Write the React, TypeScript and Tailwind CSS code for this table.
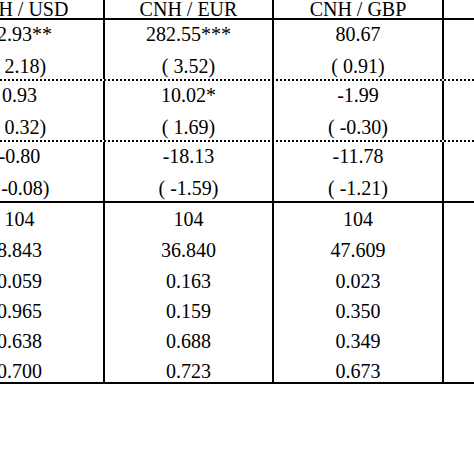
const header = ["CNH / USD", "CNH / EUR", "CNH / GBP", ""];

type Line = { cells: string[]; cls: string };

// blocks of rows, each block closed by a rule; cls = row height + line height
const blocks: { rows: Line[]; rule: "dotted" | "solid" }[] = [
  {
    rows: [
      { cells: ["62.93**", "282.55***", "80.67", ""], cls: "h-[29px] leading-[28px]" },
      { cells: ["( 2.18)", "( 3.52)", "( 0.91)", ""], cls: "h-[30px] leading-[34px]" },
    ],
    rule: "dotted",
  },
  {
    rows: [
      { cells: ["0.93", "10.02*", "-1.99", ""], cls: "h-[29px] leading-[28px]" },
      { cells: ["( 0.32)", "( 1.69)", "( -0.30)", ""], cls: "h-[30px] leading-[34px]" },
    ],
    rule: "dotted",
  },
  {
    rows: [
      { cells: ["-0.80", "-18.13", "-11.78", ""], cls: "h-[29px] leading-[28px]" },
      { cells: ["( -0.08)", "( -1.59)", "( -1.21)", ""], cls: "h-[30px] leading-[35px]" },
    ],
    rule: "solid",
  },
  {
    rows: [
      { cells: ["104", "104", "104", ""], cls: "h-[31px] leading-[33px]" },
      { cells: ["8.843", "36.840", "47.609", ""], cls: "h-[30px] leading-[33px]" },
      { cells: ["0.059", "0.163", "0.023", ""], cls: "h-[30px] leading-[34px]" },
      { cells: ["0.965", "0.159", "0.350", ""], cls: "h-[30px] leading-[34px]" },
      { cells: ["0.638", "0.688", "0.349", ""], cls: "h-[30px] leading-[34px]" },
      { cells: ["0.700", "0.723", "0.673", ""], cls: "h-[28px] leading-[34px]" },
    ],
    rule: "solid",
  },
];

function Row({ cells, cls }: Line) {
  return (
    <div className="grid grid-cols-[169px_169px_170px_170px]">
      {cells.map((c, i) => (
        <div
          key={i}
          className={`${cls} whitespace-pre text-center ${i < 3 ? "border-r-2 border-black" : ""}`}
        >
          {c}
        </div>
      ))}
    </div>
  );
}

export default function App() {
  return (
    <div
      className="h-[474px] w-[474px] overflow-hidden bg-white text-[20px] text-black"
      style={{ fontFamily: '"Liberation Serif", "Times New Roman", serif' }}
    >
      <div className="-ml-[64px] -mt-[3px] w-[678px]">
        <div className="border-b-2 border-black">
          <Row cells={header} cls="h-[21px] leading-[24px]" />
        </div>
        {blocks.map((b, i) => (
          <div
            key={i}
            className={`border-b-2 border-black ${b.rule === "dotted" ? "border-dotted" : "border-solid"}`}
          >
            {b.rows.map((r, j) => (
              <Row key={j} cells={r.cells} cls={r.cls} />
            ))}
          </div>
        ))}
      </div>
    </div>
  );
}
